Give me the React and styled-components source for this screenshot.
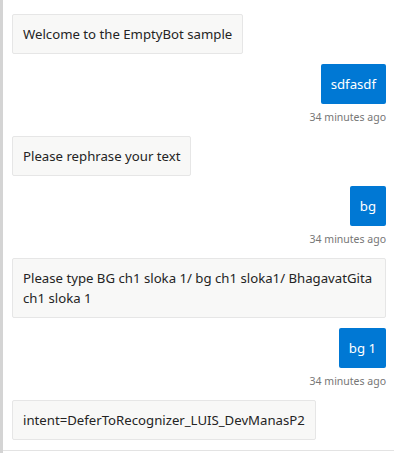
import React from "react";
import styled, { createGlobalStyle } from "styled-components";

const Global = createGlobalStyle`
  html, body { margin: 0; padding: 0; background: #fff; }
  body { font-family: "Noto Sans", "Open Sans", Arial, sans-serif; }
`;

const Frame = styled.div`
  height: 453px;
  box-sizing: border-box;
  border-left: 3px solid #d4d4d4;
  background: #fff;
`;

const Transcript = styled.div`
  height: 451px;
  box-sizing: border-box;
  border-bottom: 1px solid #e3e3e3;
  padding: 14px 8px 0 9px;
  display: flex;
  flex-direction: column;
  gap: 10px;
  overflow: hidden;
`;

const Group = styled.div`
  display: flex;
  flex-direction: column;
  align-items: ${(p) => (p.$user ? "flex-end" : "flex-start")};
`;

const Bubble = styled.div`
  box-sizing: border-box;
  max-width: 100%;
  padding: ${(p) => (p.$user ? "10px 10px" : "9px 10px")};
  font-size: 13.2px;
  line-height: 20px;
  color: ${(p) => (p.$user ? "#fff" : "#242424")};
  background: ${(p) => (p.$user ? "#0078d4" : "#f8f8f7")};
  border: ${(p) => (p.$user ? "none" : "1px solid #e6e6e6")};
  border-radius: 2px;
  width: ${(p) => (p.$full ? "100%" : "auto")};
`;

const Time = styled.div`
  margin-top: 4px;
  font-size: 10.5px;
  line-height: 18px;
  color: #767676;
`;

const messages = [
  { user: false, text: "Welcome to the EmptyBot sample" },
  { user: true, text: "sdfasdf", time: "34 minutes ago" },
  { user: false, text: "Please rephrase your text" },
  { user: true, text: "bg", time: "34 minutes ago" },
  {
    user: false,
    full: true,
    text: "Please type BG ch1 sloka 1/ bg ch1 sloka1/ BhagavatGita ch1 sloka 1",
  },
  { user: true, text: "bg 1", time: "34 minutes ago" },
  { user: false, text: "intent=DeferToRecognizer_LUIS_DevManasP2" },
];

export default function App() {
  return (
    <>
      <Global />
      <Frame>
        <Transcript>
          {messages.map((m, i) => (
            <Group key={i} $user={m.user}>
              <Bubble $user={m.user} $full={m.full}>
                {m.text}
              </Bubble>
              {m.time && <Time>{m.time}</Time>}
            </Group>
          ))}
        </Transcript>
      </Frame>
    </>
  );
}
